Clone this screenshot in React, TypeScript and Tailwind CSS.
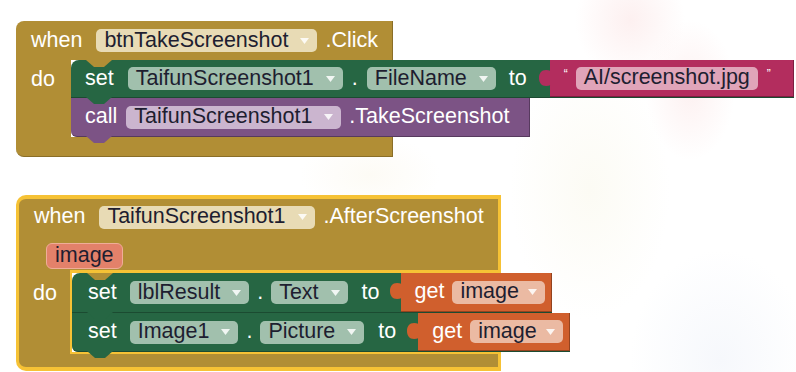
import React from 'react'
import clsx from 'clsx'

const gold = '#b18e35'

const Arrow = () => (
  <svg width="9" height="6" viewBox="0 0 9 6" className="shrink-0">
    <path d="M0 0H9L4.5 6Z" fill="#fff" fillOpacity="0.85" />
  </svg>
)

const Pill = ({
  children,
  className,
  arrow = true,
  tight = false,
}: {
  children: React.ReactNode
  className?: string
  arrow?: boolean
  tight?: boolean
}) => (
  <span
    className={clsx(
      'flex h-[23px] shrink-0 items-center rounded-[5px] text-[#1e1e30]',
      arrow ? 'pl-[8px] pr-[8px]' : 'px-[8px]',
      arrow && (tight ? 'gap-[9px]' : 'gap-[12px]'),
      className
    )}
  >
    {children}
    {arrow && <Arrow />}
  </span>
)

// statement notch
const Tab = ({ fill, className }: { fill: string; className?: string }) => (
  <svg width="26" height="7" viewBox="0 0 26 7" className={clsx('absolute left-[15px] z-10', className)}>
    <path d="M0 0L8 7H18L26 0Z" fill={fill} />
  </svg>
)

// value output knob
const Knob = ({ fill }: { fill: string }) => (
  <svg width="12" height="20" viewBox="0 0 12 20" className="absolute -left-[11px] top-[8px]">
    <path d="M12 0V3C4 0 0 4 0 10C0 16 4 20 12 17V20Z" fill={fill} />
  </svg>
)

const App: React.FC = () => {
  return (
    <div className="relative h-[372px] w-[796px] overflow-hidden bg-white bg-[radial-gradient(ellipse_55px_60px_at_630px_20px,#fdf0f0,transparent),radial-gradient(ellipse_45px_70px_at_690px_90px,#fdf1f1,transparent),radial-gradient(ellipse_80px_130px_at_590px_190px,#fcfbf4,transparent),radial-gradient(ellipse_90px_110px_at_720px_360px,#f6f8fc,transparent),radial-gradient(ellipse_70px_40px_at_370px_175px,#fdfbf5,transparent)] font-['Liberation_Sans',Arial,sans-serif] text-[21.5px] leading-none text-white">
      {/* when btnTakeScreenshot.Click */}
      <div className="absolute left-[16px] top-[21px] flex flex-col items-start">
        <div className="flex h-[39px] w-[377px] items-center rounded-tl-[8px] border-r border-[#8a6e27] bg-[#b18e35] pl-[15px]">
          <span>when</span>
          <Pill className="ml-[14px] bg-[#e8dbb5]">btnTakeScreenshot</Pill>
          <span className="ml-[8px]">.Click</span>
        </div>
        <div className="flex">
          <div className="w-[55px] bg-[#b18e35] pl-[15px] pt-[9px]">do</div>
          <div className="relative flex flex-col items-start">
            <Tab fill={gold} className="top-0" />
            <div className="relative flex h-[38px] items-center rounded-tl-[8px] border-b border-[#1b4b31] bg-[#266643] pl-[14px]">
              <span>set</span>
              <Pill className="ml-[14px] bg-[#a1c0ad]">TaifunScreenshot1</Pill>
              <span className="ml-[9px]">.</span>
              <Pill className="ml-[9px] bg-[#a1c0ad]">FileName</Pill>
              <span className="ml-[13px]">to</span>
              <div className="relative ml-[23px] flex items-center self-stretch border-b border-r border-[#7b1f40] bg-[#b32d5e] pl-[14px] pr-[22px]">
                <Knob fill="#b32d5e" />
                <span className="mb-[8px] text-[12px]">“</span>
                <Pill arrow={false} className="ml-[8px] bg-[#e0a4b9]">AI/screenshot.jpg</Pill>
                <span className="mb-[8px] ml-[9px] text-[12px]">”</span>
              </div>
              <Tab fill="#266643" className="top-full" />
            </div>
            <div className="relative flex h-[39px] items-center rounded-bl-[6px] border-b border-r border-[#573a5e] bg-[#7c5385] pl-[14px] pr-[19px]">
              <span>call</span>
              <Pill className="ml-[9px] bg-[#cbb5cf]">TaifunScreenshot1</Pill>
              <span className="ml-[8px]">.TakeScreenshot</span>
              <Tab fill="#7c5385" className="top-full" />
            </div>
          </div>
        </div>
        <div className="h-[20px] w-[377px] rounded-bl-[8px] border-b border-r border-[#8a6e27] bg-[#b18e35]" />
      </div>

      {/* when TaifunScreenshot1.AfterScreenshot (selected) */}
      <div className="absolute left-[16px] top-[195px] flex flex-col items-start">
        <div className="flex w-[485px] flex-col rounded-tl-[10px] border-l-[3px] border-r-[3px] border-t-[4px] border-[#f6c235] bg-[#b18e35]">
          <div className="flex h-[36px] items-center pl-[15px]">
            <span>when</span>
            <Pill className="ml-[14px] bg-[#e8dbb5]">TaifunScreenshot1</Pill>
            <span className="ml-[9px]">.AfterScreenshot</span>
          </div>
          <div className="mt-[8px] flex pl-[27px]">
            <span className="flex h-[26px] items-center rounded-[6px] border border-[#efad98] bg-[#e3816a] px-[8px] text-[#1e1e30]">
              image
            </span>
          </div>
          <div className="mt-[1px] flex h-[3px]">
            <div className="w-[51px]" />
            <div className="flex-1 bg-[#f6c235]" />
          </div>
        </div>
        <div className="flex">
          <div className="w-[56px] border-l-[3px] border-r-[2px] border-[#f6c235] bg-[#b18e35] pl-[14px] pt-[10px]">do</div>
          <div className="relative flex flex-col items-start">
            <Tab fill={gold} className="top-0" />
            <div className="relative flex h-[40px] items-center rounded-tl-[8px] border-b border-[#1b4b31] bg-[#266643] pl-[16px]">
              <span>set</span>
              <Pill className="ml-[13px] bg-[#a1c0ad]">lblResult</Pill>
              <span className="ml-[8px]">.</span>
              <Pill className="ml-[8px] bg-[#a1c0ad]">Text</Pill>
              <span className="ml-[14px]">to</span>
              <div className="relative ml-[21px] flex items-center self-stretch border-b border-r border-[#93431f] bg-[#d05f2d] pl-[14px] pr-[6px]">
                <Knob fill="#d05f2d" />
                <span>get</span>
                <Pill tight className="ml-[8px] bg-[#ebbaa3]">image</Pill>
              </div>
              <Tab fill="#266643" className="top-full" />
            </div>
            <div className="relative flex h-[39px] items-center rounded-bl-[6px] border-b border-[#1b4b31] bg-[#266643] pl-[16px]">
              <span>set</span>
              <Pill className="ml-[13px] bg-[#a1c0ad]">Image1</Pill>
              <span className="ml-[8px]">.</span>
              <Pill className="ml-[8px] bg-[#a1c0ad]">Picture</Pill>
              <span className="ml-[14px]">to</span>
              <div className="relative ml-[22px] flex items-center self-stretch border-b border-r border-[#93431f] bg-[#d05f2d] pl-[14px] pr-[6px]">
                <Knob fill="#d05f2d" />
                <span>get</span>
                <Pill tight className="ml-[8px] bg-[#ebbaa3]">image</Pill>
              </div>
              <Tab fill="#266643" className="top-full" />
            </div>
          </div>
        </div>
        <div className="flex w-[485px] flex-col rounded-bl-[10px] border-b-[4px] border-l-[3px] border-r-[3px] border-[#f6c235] bg-[#b18e35]">
          <div className="flex h-[2px]">
            <div className="w-[51px]" />
            <div className="flex-1 bg-[#f6c235]" />
          </div>
          <div className="h-[13px]" />
        </div>
      </div>
    </div>
  )
}

export default App
